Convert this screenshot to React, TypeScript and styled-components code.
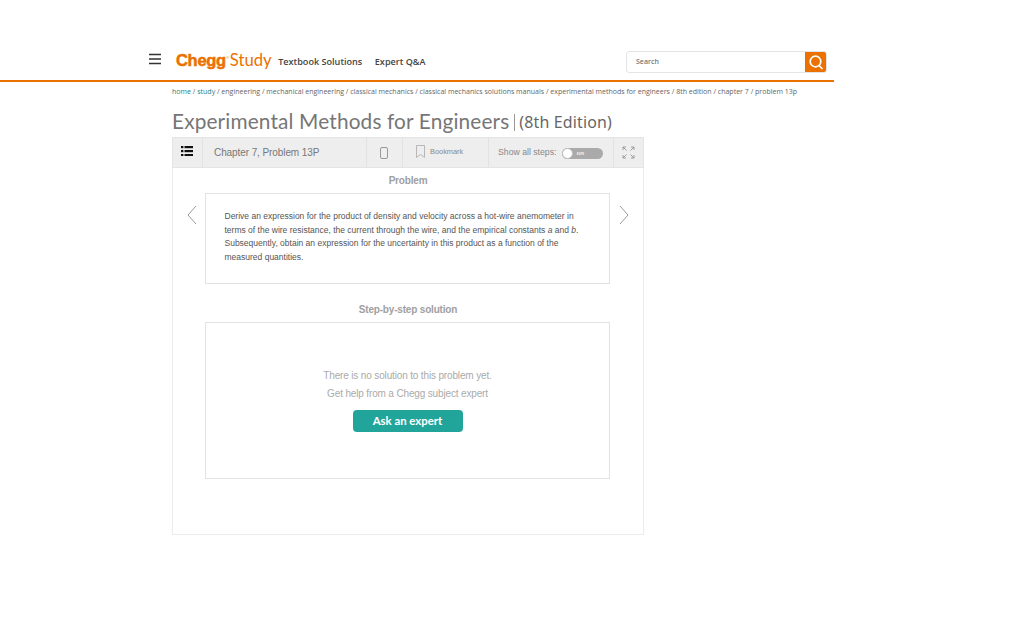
import React from "react";
import styled, { createGlobalStyle } from "styled-components";

const Global = createGlobalStyle`
  html, body { margin: 0; padding: 0; background: #fff; }
  body { font-family: "Liberation Sans", Arial, sans-serif; }
`;
const Page = styled.div`width: 834px; height: 640px; padding-top: 40px; box-sizing: border-box;`;
const Header = styled.header`
  height: 42px; box-sizing: border-box; border-bottom: 2px solid #eb7100;
  display: flex; align-items: center; padding: 0 7px 0 148px;
`;
const Burger = styled.svg`width: 13px; height: 12px; margin-right: 14px; margin-left: 1px; margin-top: -2px;`;
const Logo = styled.div`display: flex; align-items: baseline; color: #eb7100; margin-right: 6.5px; margin-top: -1px;`;
const LogoBold = styled.span`font: 900 16.5px "Liberation Sans", sans-serif; letter-spacing: -0.3px; -webkit-text-stroke: 0.5px #eb7100;`;
const LogoMark = styled.span`font: 400 4px "Liberation Sans", sans-serif; align-self: flex-start; margin-top: 5px; margin-left: 0.5px;`;
const LogoLight = styled.span`font: 400 16.7px Lato, sans-serif; margin-left: 0.5px;`;
const NavLink = styled.a`font: 600 9.1px "Open Sans", sans-serif; color: #444; margin-right: 12.5px; margin-top: 3px;`;
const Search = styled.div`
  margin-left: auto; width: 201px; height: 22px; box-sizing: border-box; display: flex; margin-top: 4px;
  border: 1px solid #e2e4e6; border-radius: 3px; overflow: hidden;
`;
const SearchLabel = styled.div`flex: 1; font: 600 7px/20px "Open Sans", sans-serif; color: #777; padding-left: 9px;`;
const SearchButton = styled.div`width: 22px; margin: -1px; background: #eb7100; display: flex; align-items: center; justify-content: center;`;
const Crumbs = styled.nav`
  font: 400 7.02px/10px "Open Sans", sans-serif; color: #666; padding: 4px 0 0 172px; white-space: nowrap;
`;
const CrumbLink = styled.a`color: #2b7f7c;`;
const Title = styled.h1`
  margin: 0 0 1px; padding: 8px 0 0 172px; display: flex; align-items: center; height: 32px;
  font: 400 20.8px/31px Lato, "Noto Sans", sans-serif; color: #767676; letter-spacing: 0.15px; white-space: nowrap; box-sizing: content-box;
`;
const Edition = styled.span`
  font: 400 15.95px "Noto Sans", sans-serif; color: #666; margin-left: 5px; padding-left: 4px; border-left: 1px solid #999; line-height: 17px; margin-top: 4px;
`;
const Panel = styled.section`
  margin: 0 0 0 172px; width: 472px; height: 398px; box-sizing: border-box;
  border: 1px solid #ececec; border-top: 0; display: flex; flex-direction: column;
`;
const Toolbar = styled.div`
  margin: 0 -1px; height: 31px; box-sizing: border-box; background: #eee; border: 1px solid #e4e4e4; display: flex;
`;
const Cell = styled.div<{ $w: number; $pad?: number }>`
  width: ${p => p.$w}px; flex: none; box-sizing: border-box; display: flex; align-items: center;
  justify-content: ${p => (p.$pad === undefined ? "center" : "flex-start")};
  padding-left: ${p => p.$pad ?? 0}px; border-left: 1px solid #e2e2e2;
  &:first-child { border-left: 0; }
`;
const ChapterText = styled.span`font-size: 10px; letter-spacing: -0.09px; color: #777;`;
const SmallText = styled.span`font-size: 7.4px; color: #888; margin-left: 5px; margin-top: -3px;`;
const StepsText = styled.span`font-size: 8.7px; color: #888; margin-top: -2px;`;
const Toggle = styled.div`
  width: 41px; height: 11px; margin-left: 6px; background: #aaa; border-radius: 6px; position: relative; margin-top: 1px;
  display: flex; align-items: center; justify-content: center; padding-right: 5px; box-sizing: border-box; font: 700 5px "Liberation Serif", serif; color: #fff;
`;
const Knob = styled.div`position: absolute; left: 0; top: 0; width: 11px; height: 11px; border-radius: 50%; background: #fff; box-sizing: border-box; border: 1px solid #bbb;`;
const SectionLabel = styled.div<{ $top: number }>`
  margin-top: ${p => p.$top}px; text-align: center; font-weight: 700; font-size: 10px; letter-spacing: -0.18px; line-height: 12px; color: #a0a0a0;
`;
const Row = styled.div`display: flex; align-items: flex-start; margin-top: 6px; height: 91px;`;
const Arrow = styled.svg`width: 32px; height: 44px; flex: none;`;
const Box = styled.div<{ $h: number }>`
  width: 405px; height: ${p => p.$h}px; flex: none; box-sizing: border-box; border: 1px solid #e2e2e2;
`;
const ProblemText = styled.p`
  margin: 0; padding: 16px 20px 0 18.5px; font-size: 8.5px; line-height: 13.5px; color: #555;
`;
const SolutionRow = styled.div`margin: 6px 0 0 32px;`;
const Empty = styled.div`display: flex; flex-direction: column; align-items: center; padding-top: 44px; font-size: 10px; letter-spacing: -0.15px; color: #aaa;`;
const EmptyLine = styled.div`line-height: 18px;`;
const AskButton = styled.button`
  margin-top: 7px; width: 110px; height: 22px; border: 0; border-radius: 4px; background: #21a59b; color: #fff;
  font: 700 11.4px Lato, "Open Sans", sans-serif; padding: 0 0 2px;
`;

export default function App() {
  return (
    <Page>
      <Global />
      <Header>
        <Burger viewBox="0 0 13 12"><path d="M0 1.5h12M0 6h12M0 10.5h12" stroke="#333" strokeWidth="1.4" fill="none" /></Burger>
        <Logo><LogoBold>Chegg</LogoBold><LogoMark>®</LogoMark><LogoLight>Study</LogoLight></Logo>
        <NavLink>Textbook Solutions</NavLink>
        <NavLink>Expert Q&amp;A</NavLink>
        <Search>
          <SearchLabel>Search</SearchLabel>
          <SearchButton>
            <svg width="16" height="16" viewBox="0 0 16 16" fill="none" stroke="#fff" strokeWidth="1.7"><circle cx="7.5" cy="7.5" r="5.3" /><path d="M11 11.5l3 3" strokeLinecap="round" /></svg>
          </SearchButton>
        </Search>
      </Header>
      <Crumbs>
        <CrumbLink>home</CrumbLink> / <CrumbLink>study</CrumbLink> / engineering / mechanical engineering / classical mechanics / classical mechanics solutions manuals / experimental methods for engineers / 8th edition / chapter 7 / problem 13p
      </Crumbs>
      <Title>Experimental Methods for Engineers<Edition>(8th Edition)</Edition></Title>
      <Panel>
        <Toolbar>
          <Cell $w={29}>
            <svg width="12" height="10" viewBox="0 0 12 10" fill="#111" style={{ marginTop: -3, marginLeft: -2 }}><rect width="2.4" height="2.2" /><rect x="3.5" width="8.5" height="2.2" /><rect y="4" width="2.4" height="2.2" /><rect x="3.5" y="4" width="8.5" height="2.2" /><rect y="8" width="2.4" height="2.2" /><rect x="3.5" y="8" width="8.5" height="2.2" /></svg>
          </Cell>
          <Cell $w={164} $pad={11}><ChapterText>Chapter 7, Problem 13P</ChapterText></Cell>
          <Cell $w={36}>
            <svg width="8" height="12" viewBox="0 0 8 12" fill="none" stroke="#999" style={{ marginLeft: -2 }}><rect x="0.5" y="0.5" width="7" height="11" rx="1.5" /></svg>
          </Cell>
          <Cell $w={86} $pad={13}>
            <svg width="9" height="13" viewBox="0 0 9 13" fill="none" stroke="#aaa" strokeWidth="0.8" style={{ marginTop: -3 }}><path d="M.5.5h8v12L4.5 9.5l-4 3z" /></svg>
            <SmallText>Bookmark</SmallText>
          </Cell>
          <Cell $w={125} $pad={9}>
            <StepsText>Show all steps:</StepsText>
            <Toggle>ON<Knob /></Toggle>
          </Cell>
          <Cell $w={30}>
            <svg width="13" height="13" viewBox="0 0 13 13" fill="none" stroke="#888" strokeWidth="0.8"><path d="M1 4V1h3M1 1l3.5 3.5M12 4V1H9M12 1L8.5 4.5M1 9v3h3M1 12l3.5-3.5M12 9v3H9M12 12L8.5 8.5" /></svg>
          </Cell>
        </Toolbar>
        <SectionLabel $top={7}>Problem</SectionLabel>
        <Row>
          <Arrow viewBox="0 0 32 44"><path d="M23 13L15 22l8 9" fill="none" stroke="#999" strokeWidth="1" /></Arrow>
          <Box $h={91}>
            <ProblemText>
              Derive an expression for the product of density and velocity across a hot-wire anemometer in terms of the wire resistance, the current through the wire, and the empirical constants <i>a</i> and <i>b</i>. Subsequently, obtain an expression for the uncertainty in this product as a function of the measured quantities.
            </ProblemText>
          </Box>
          <Arrow viewBox="0 0 32 44"><path d="M10 13l8 9-8 9" fill="none" stroke="#999" strokeWidth="1" /></Arrow>
        </Row>
        <SectionLabel $top={20}>Step-by-step solution</SectionLabel>
        <SolutionRow>
          <Box $h={157}>
            <Empty>
              <EmptyLine>There is no solution to this problem yet.</EmptyLine>
              <EmptyLine>Get help from a Chegg subject expert</EmptyLine>
              <AskButton>Ask an expert</AskButton>
            </Empty>
          </Box>
        </SolutionRow>
      </Panel>
    </Page>
  );
}
